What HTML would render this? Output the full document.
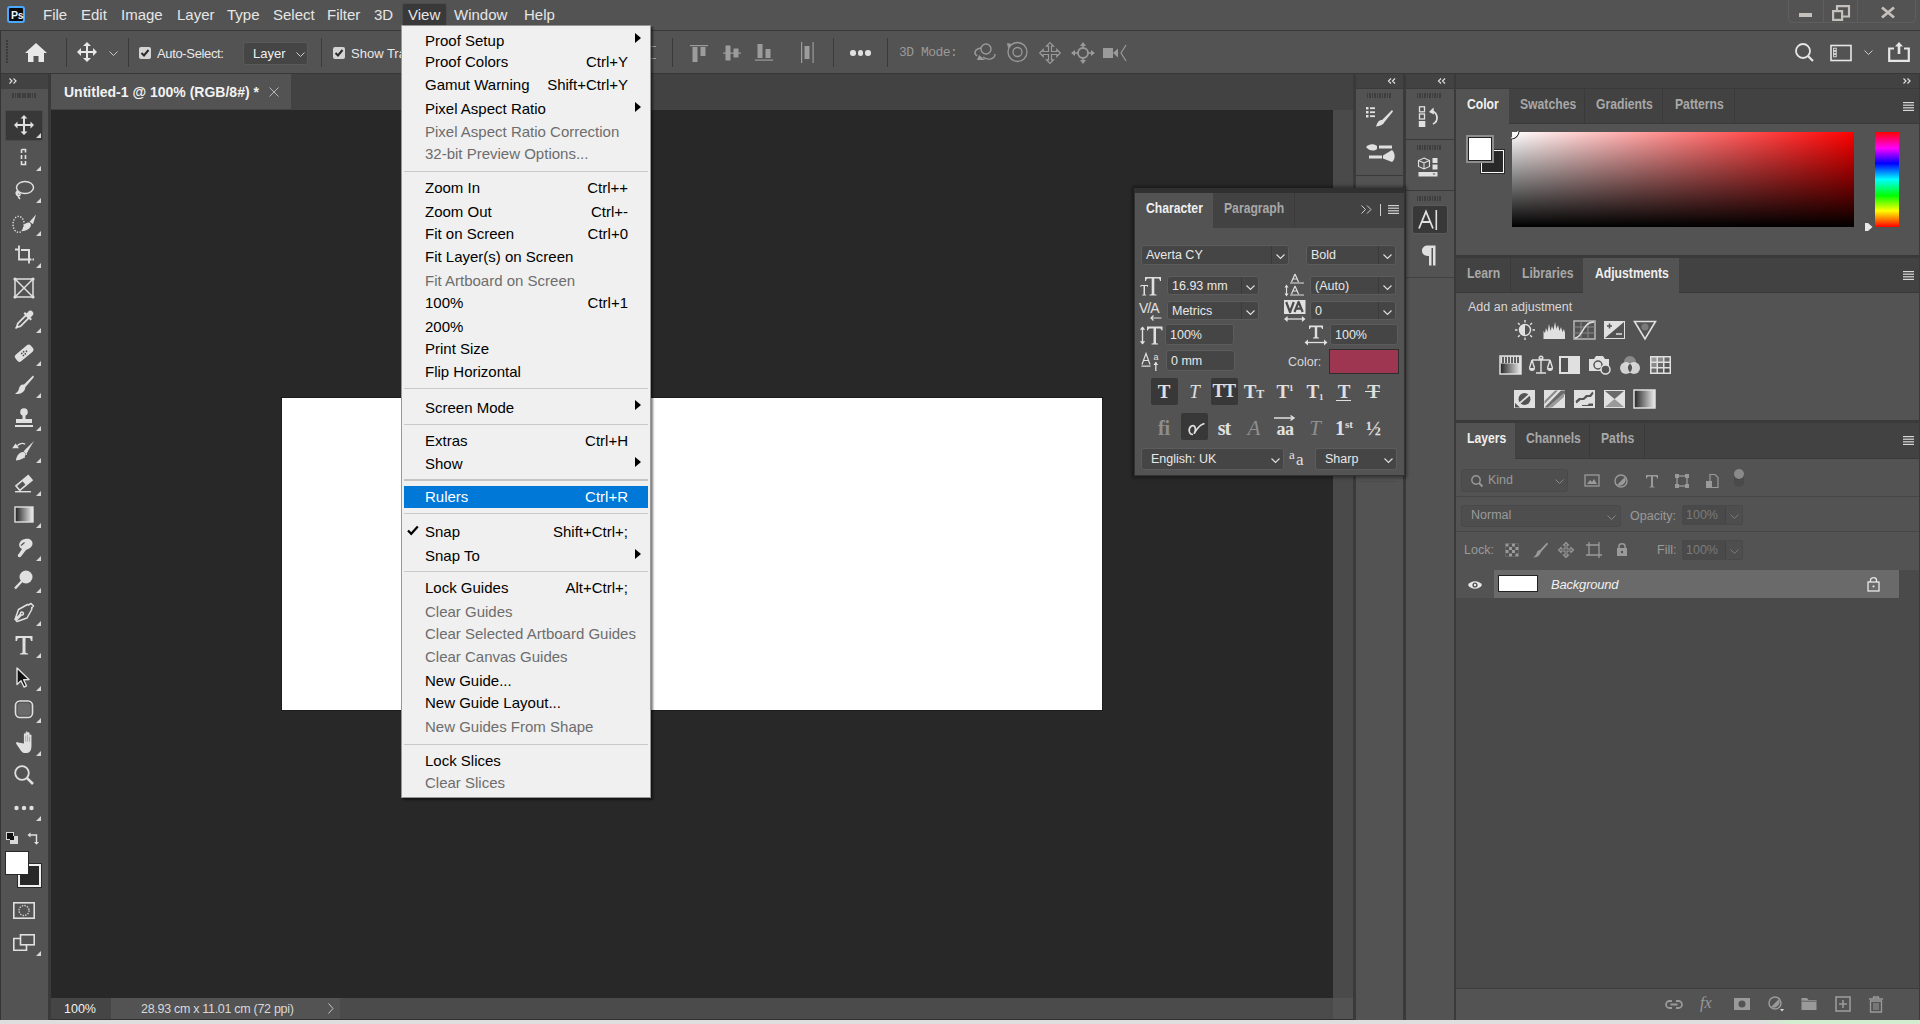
<!DOCTYPE html>
<html><head><meta charset="utf-8">
<style>
*{margin:0;padding:0;box-sizing:border-box}
html,body{width:1920px;height:1024px;overflow:hidden;background:#535353;font-family:"Liberation Sans",sans-serif;position:relative}
.a{position:absolute}
.t{position:absolute;white-space:nowrap;line-height:1}
svg{position:absolute;overflow:visible}
/* menubar */
#mb .t{font-size:15px;color:#e6e6e6;top:7px}
/* menu */
#menu{left:401px;top:25px;width:250px;height:773px;background:#f0f0f0;border:1px solid #a0a0a0;box-shadow:2px 2px 3px rgba(0,0,0,.45)}
.mi{font-size:15px}
#menu .s{left:auto;right:22px}
#menu .d{color:#6d6d6d}
#menu .sep{position:absolute;left:2px;right:2px;height:1px;background:#c8c8c8}
#menu .arr{position:absolute;left:234px;width:0;height:0;border-left:6px solid #000;border-top:5px solid transparent;border-bottom:5px solid transparent}
.tab{font-size:14px;font-weight:bold;transform:scaleX(.87);transform-origin:0 0}
</style></head>
<body>
<!-- MENU BAR -->
<div id="mb" class="a" style="left:0;top:0;width:1920px;height:30px;background:#535353">
  <div class="a" style="left:7px;top:5.5px;width:18px;height:17.5px;border:2px solid #4aa8ff;border-radius:3px;background:#0d0a0a"></div>
  <div class="t" style="left:11px;top:9.5px;font-size:10.5px;font-weight:bold;color:#eef2ff;letter-spacing:-0.3px">Ps</div>
  <div class="t" style="left:43px">File</div>
  <div class="t" style="left:81px">Edit</div>
  <div class="t" style="left:121px">Image</div>
  <div class="t" style="left:177px">Layer</div>
  <div class="t" style="left:227px">Type</div>
  <div class="t" style="left:273px">Select</div>
  <div class="t" style="left:327px">Filter</div>
  <div class="t" style="left:374px">3D</div>
  <div class="a" style="left:401.5px;top:3px;width:45px;height:22px;background:#393939;border:1px solid #4c4c4c;border-bottom:none;border-radius:3px 3px 0 0"></div>
  <div class="t" style="left:408px">View</div>
  <div class="t" style="left:454px">Window</div>
  <div class="t" style="left:524px">Help</div>
</div>
<div class="a" style="left:0;top:30px;width:1920px;height:1px;background:#393939"></div><div class="a" style="left:0;top:31px;width:1px;height:42px;background:#393939"></div>
<!-- OPTIONS BAR -->
<div id="ob" class="a" style="left:0;top:31px;width:1920px;height:42px;background:#535353"></div>
<!-- grip -->
<div class="a" style="left:6px;top:40px;width:2px;height:24px;background:repeating-linear-gradient(#3a3a3a 0 2px,transparent 2px 3px)"></div>
<!-- home -->
<svg style="left:25px;top:43px" width="22" height="19" viewBox="0 0 22 19"><path d="M11 0 L22 10 L19 10 L19 19 L13.5 19 L13.5 13 L8.5 13 L8.5 19 L3 19 L3 10 L0 10 Z" fill="#e8e8e8"/></svg>
<div class="a" style="left:66px;top:38px;width:1px;height:29px;background:#3a3a3a"></div>
<!-- move icon -->
<svg style="left:77px;top:42px" width="20" height="20" viewBox="0 0 20 20"><g fill="#e8e8e8"><path d="M10 0 L14 4 L11 4 L11 9 L16 9 L16 6 L20 10 L16 14 L16 11 L11 11 L11 16 L14 16 L10 20 L6 16 L9 16 L9 11 L4 11 L4 14 L0 10 L4 6 L4 9 L9 9 L9 4 L6 4 Z"/></g></svg>
<svg style="left:109px;top:51px" width="9" height="6" viewBox="0 0 9 6"><path d="M0.5 0.5 L4.5 4.5 L8.5 0.5" fill="none" stroke="#c8c8c8" stroke-width="1"/></svg>
<div class="a" style="left:128px;top:38px;width:1px;height:29px;background:#3a3a3a"></div>
<!-- checkbox -->
<div class="a" style="left:139px;top:47px;width:12px;height:12px;background:#d4d4d4;border-radius:2px"></div>
<svg style="left:140px;top:48px" width="10" height="10" viewBox="0 0 10 10"><path d="M1.5 5 L4 7.5 L8.5 2" fill="none" stroke="#2a2a2a" stroke-width="2"/></svg>
<div class="t" style="left:157px;top:47px;font-size:13px;color:#e8e8e8;letter-spacing:-0.35px">Auto-Select:</div>
<div class="a" style="left:243px;top:42px;width:65px;height:23px;background:#454545;border:1px solid #5a5a5a;border-radius:3px"></div>
<div class="t" style="left:253px;top:47px;font-size:13px;color:#f0f0f0">Layer</div>
<svg style="left:296px;top:52px" width="9" height="6" viewBox="0 0 9 6"><path d="M0.5 0.5 L4.5 4.5 L8.5 0.5" fill="none" stroke="#d0d0d0" stroke-width="1"/></svg>
<div class="a" style="left:321px;top:38px;width:1px;height:29px;background:#3a3a3a"></div>
<div class="a" style="left:333px;top:47px;width:12px;height:12px;background:#d4d4d4;border-radius:2px"></div>
<svg style="left:334px;top:48px" width="10" height="10" viewBox="0 0 10 10"><path d="M1.5 5 L4 7.5 L8.5 2" fill="none" stroke="#2a2a2a" stroke-width="2"/></svg>
<div class="t" style="left:351px;top:47px;font-size:13px;color:#e8e8e8">Show Transform Controls</div>
<!-- align icons -->
<div class="a" style="left:672px;top:38px;width:1px;height:29px;background:#3a3a3a"></div>
<div class="a" style="left:651px;top:46px;width:5px;height:1.2px;background:#9c9c9c"></div><div class="a" style="left:651px;top:58px;width:5px;height:1.2px;background:#9c9c9c"></div>
<svg style="left:690px;top:45px" width="20" height="18" viewBox="0 0 20 18"><g fill="#9c9c9c"><rect x="0" y="0" width="18" height="1.2"/><rect x="2.5" y="2" width="5" height="15"/><rect x="10.5" y="2" width="5" height="9"/></g></svg>
<svg style="left:723px;top:45px" width="20" height="18" viewBox="0 0 20 18"><g fill="#9c9c9c"><rect x="0" y="7.5" width="18" height="1.2"/><rect x="2.5" y="0.5" width="5" height="15"/><rect x="10.5" y="3.5" width="5" height="9"/></g></svg>
<svg style="left:755px;top:44px" width="20" height="18" viewBox="0 0 20 18"><g fill="#9c9c9c"><rect x="0" y="15.5" width="18" height="1.2"/><rect x="2.5" y="0" width="5" height="14"/><rect x="10.5" y="5" width="5" height="9"/></g></svg>
<svg style="left:800px;top:42px" width="16" height="22" viewBox="0 0 16 22"><g fill="#9c9c9c"><rect x="1" y="0" width="1.2" height="21"/><rect x="12.5" y="0" width="1.2" height="21"/><rect x="4.5" y="4" width="5" height="13"/></g></svg>
<div class="a" style="left:833px;top:38px;width:1px;height:29px;background:#3a3a3a"></div>
<div class="a" style="left:850px;top:50px;width:5.5px;height:5.5px;border-radius:50%;background:#e0e0e0"></div>
<div class="a" style="left:857.5px;top:50px;width:5.5px;height:5.5px;border-radius:50%;background:#e0e0e0"></div>
<div class="a" style="left:865px;top:50px;width:5.5px;height:5.5px;border-radius:50%;background:#e0e0e0"></div>
<div class="a" style="left:887px;top:38px;width:1px;height:29px;background:#3a3a3a"></div>
<div class="t" style="left:899px;top:46px;font-size:13px;color:#9a9a9a;font-family:'Liberation Mono',monospace;letter-spacing:-0.5px">3D Mode:</div>
<!-- 3d icons -->
<svg style="left:973px;top:41px" width="24" height="22" viewBox="0 0 24 22"><g fill="none" stroke="#9a9a9a" stroke-width="1.4"><circle cx="13" cy="8" r="5"/><path d="M8 7 C2 8 0 12 4 15 M10 16 C15 20 22 18 22 13"/></g><path d="M6 14 L12 19 L4 19 Z" fill="#9a9a9a"/></svg>
<svg style="left:1006px;top:41px" width="22" height="22" viewBox="0 0 22 22"><g fill="none" stroke="#9a9a9a" stroke-width="1.3"><circle cx="11.5" cy="11" r="9.5"/><circle cx="11.5" cy="11" r="4.5"/></g><path d="M1 2 L6 3 L2 7 Z" fill="#9a9a9a"/></svg>
<svg style="left:1039px;top:42px" width="22" height="22" viewBox="0 0 22 22"><path d="M11 0.7 L14.5 4.2 L12.5 4.2 L12.5 9.5 L17.8 9.5 L17.8 7.5 L21.3 11 L17.8 14.5 L17.8 12.5 L12.5 12.5 L12.5 17.8 L14.5 17.8 L11 21.3 L7.5 17.8 L9.5 17.8 L9.5 12.5 L4.2 12.5 L4.2 14.5 L0.7 11 L4.2 7.5 L4.2 9.5 L9.5 9.5 L9.5 4.2 L7.5 4.2 Z" fill="none" stroke="#9a9a9a" stroke-width="1.2"/></svg>
<svg style="left:1071px;top:42px" width="24" height="22" viewBox="0 0 24 22"><g fill="#9a9a9a"><path d="M12 0 L15 4 L9 4 Z M12 22 L15 18 L9 18 Z M0 11 L4 8 L4 14 Z M24 11 L20 8 L20 14 Z"/></g><circle cx="12" cy="11" r="5" fill="none" stroke="#9a9a9a" stroke-width="1.8"/><path d="M12 4 V6 M12 16 V18 M4 11 H7 M17 11 H20" stroke="#9a9a9a" stroke-width="1.5"/></svg>
<svg style="left:1103px;top:44px" width="26" height="18" viewBox="0 0 26 18"><rect x="0" y="4" width="10" height="10" fill="#9a9a9a"/><path d="M10 9 L15 4.5 L15 13.5 Z" fill="#9a9a9a"/><path d="M23 1 L18 9 L23 17" fill="none" stroke="#9a9a9a" stroke-width="1.2"/></svg>
<!-- right icons -->
<svg style="left:1795px;top:43px" width="20" height="20" viewBox="0 0 20 20"><circle cx="8" cy="8" r="7" fill="none" stroke="#e6e6e6" stroke-width="1.8"/><path d="M13 13 L18 18" stroke="#e6e6e6" stroke-width="2.2"/></svg>
<svg style="left:1830px;top:44px" width="22" height="18" viewBox="0 0 22 18"><rect x="1" y="1.5" width="20" height="15" fill="none" stroke="#e6e6e6" stroke-width="1.6"/><g fill="none" stroke="#e6e6e6" stroke-width="0.9"><rect x="3.6" y="4.2" width="2.6" height="2.4"/><rect x="3.6" y="7.3" width="2.6" height="2.4"/><rect x="3.6" y="10.4" width="2.6" height="2.4"/></g></svg>
<svg style="left:1864px;top:50px" width="9" height="6" viewBox="0 0 9 6"><path d="M0.5 0.5 L4.5 4.5 L8.5 0.5" fill="none" stroke="#c8c8c8" stroke-width="1"/></svg>
<svg style="left:1888px;top:41px" width="22" height="21" viewBox="0 0 22 21"><path d="M6 7.5 L1.2 7.5 L1.2 19.8 L20.8 19.8 L20.8 7.5 L16 7.5" fill="none" stroke="#e6e6e6" stroke-width="2.2"/><path d="M11 1 L15 5.5 L12.3 5.5 L12.3 13 L9.7 13 L9.7 5.5 L7 5.5 Z" fill="#e6e6e6"/></svg>
<!-- window controls -->
<div class="a" style="left:1788px;top:-3px;width:128px;height:26px;border:1px solid #5e5e5e;border-radius:4px"></div>
<div class="a" style="left:1823px;top:0;width:1px;height:23px;background:#5e5e5e"></div>
<div class="a" style="left:1857px;top:0;width:1px;height:23px;background:#5e5e5e"></div>
<div class="a" style="left:1799px;top:12.5px;width:13px;height:4px;background:#c4c0bc"></div>
<svg style="left:1832px;top:5px" width="18" height="16" viewBox="0 0 18 16"><g fill="none" stroke="#c4c0bc" stroke-width="2.2"><rect x="1.1" y="6.1" width="9" height="8.8"/><path d="M5 5.5 V1.1 H17 V11.5 H11"/></g></svg>
<svg style="left:1881px;top:7px" width="14" height="11" viewBox="0 0 14 11"><path d="M1 0.5 L13 10.5 M13 0.5 L1 10.5" stroke="#c4c0bc" stroke-width="2.8"/></svg>
<div class="a" style="left:0;top:73px;width:1920px;height:1px;background:#383838"></div>
<!-- LEFT TOOLBAR -->
<div id="tb" class="a" style="left:0;top:74px;width:48px;height:946px;background:#535353"></div>
<!--TOOLS-->
<div class="a" style="left:0;top:74px;width:48px;height:15px;background:#424242"></div>
<svg style="left:9px;top:78px" width="8" height="6" viewBox="0 0 8 6"><path d="M0.5 0.5 L3 3 L0.5 5.5 M4.5 0.5 L7 3 L4.5 5.5" fill="none" stroke="#e0e0e0" stroke-width="1.2"/></svg>
<div class="a" style="left:12px;top:93px;width:24px;height:5px;background:repeating-linear-gradient(90deg,#3e3e3e 0 1.5px,transparent 1.5px 2.5px)"></div>
<div class="a" style="left:5px;top:110px;width:38px;height:31px;background:#383838;border:1px solid #4a4a4a;border-radius:2px"></div>
<svg style="left:12px;top:113.0px" width="24" height="24" viewBox="0 0 24 24"><path d="M12 2 L15.5 5.5 L13 5.5 L13 11 L18.5 11 L18.5 8.5 L22 12 L18.5 15.5 L18.5 13 L13 13 L13 18.5 L15.5 18.5 L12 22 L8.5 18.5 L11 18.5 L11 13 L5.5 13 L5.5 15.5 L2 12 L5.5 8.5 L5.5 11 L11 11 L11 5.5 L8.5 5.5 Z" fill="#e0e0e0"/></svg>
<svg style="left:36px;top:133.0px" width="5" height="5" viewBox="0 0 5 5"><path d="M5 0 V5 H0 Z" fill="#d8d8d8"/></svg>
<svg style="left:12px;top:145.5px" width="24" height="24" viewBox="0 0 24 24"><g fill="none" stroke="#e0e0e0" stroke-width="1.6"><path d="M9.5 3.5 H13.5 V6.5 M9.5 3.5 V7 M13.5 9 V13 M9.5 9 V13 M13.5 15 V18.5 H9.5 V15"/></g></svg>
<svg style="left:36px;top:165.5px" width="5" height="5" viewBox="0 0 5 5"><path d="M5 0 V5 H0 Z" fill="#d8d8d8"/></svg>
<svg style="left:12px;top:178.0px" width="24" height="24" viewBox="0 0 24 24"><g fill="none" stroke="#e0e0e0" stroke-width="1.5"><ellipse cx="13" cy="9.5" rx="8.5" ry="6"/><path d="M6 13 C3 14 4 18 7 17.5 C9 17 8 14.5 6 14.5 C5 15 6 19 8 21"/></g></svg>
<svg style="left:36px;top:198.0px" width="5" height="5" viewBox="0 0 5 5"><path d="M5 0 V5 H0 Z" fill="#d8d8d8"/></svg>
<svg style="left:12px;top:210.5px" width="24" height="24" viewBox="0 0 24 24"><ellipse cx="6.6" cy="13.4" rx="5.6" ry="8" fill="none" stroke="#e0e0e0" stroke-width="1.4" stroke-dasharray="1.3 1.5"/><path d="M10.2 20 C11 15.5 13 11.8 16.3 11.6 C18.4 11.5 19.6 13.4 18.6 15.4 C17.2 18.4 13.8 19.7 10.2 20 Z" fill="#e0e0e0"/><path d="M17.6 10.8 L24 3.6 L21 13.2 Z" fill="#e0e0e0"/></svg>
<svg style="left:36px;top:230.5px" width="5" height="5" viewBox="0 0 5 5"><path d="M5 0 V5 H0 Z" fill="#d8d8d8"/></svg>
<svg style="left:12px;top:243.0px" width="24" height="24" viewBox="0 0 24 24"><g fill="none" stroke="#e0e0e0" stroke-width="1.8"><path d="M3 6.5 H7 M7 2.5 V16.5 H19.5 M20.5 16.5 H22 M17 20.5 V7 H9"/></g><path d="M17 7 V16.5" stroke="#e0e0e0" stroke-width="1.8"/></svg>
<svg style="left:36px;top:263.0px" width="5" height="5" viewBox="0 0 5 5"><path d="M5 0 V5 H0 Z" fill="#d8d8d8"/></svg>
<svg style="left:12px;top:275.5px" width="24" height="24" viewBox="0 0 24 24"><g fill="none" stroke="#e0e0e0" stroke-width="1.5"><rect x="3" y="3" width="18" height="18"/><path d="M3 3 L21 21 M21 3 L3 21"/></g><g fill="#e0e0e0"><circle cx="3" cy="3" r="1.6"/><circle cx="21" cy="3" r="1.6"/><circle cx="3" cy="21" r="1.6"/><circle cx="21" cy="21" r="1.6"/></g></svg>
<svg style="left:12px;top:308.0px" width="24" height="24" viewBox="0 0 24 24"><path d="M20.5 3.5 C19 2 17 2.5 16 4 L14.5 5.5 L13 4 L11.5 5.5 L13 7 L5 15 L4 18.5 L3 20 L4 21 L5.5 20 L9 19 L17 11 L18.5 12.5 L20 11 L18.5 9.5 L20 8 C21.5 7 22 5 20.5 3.5 Z M6.5 16 L14 8.5 L15.5 10 L8 17.5 L6 18 Z" fill="#e0e0e0" fill-rule="evenodd"/></svg>
<svg style="left:36px;top:328.0px" width="5" height="5" viewBox="0 0 5 5"><path d="M5 0 V5 H0 Z" fill="#d8d8d8"/></svg>
<svg style="left:12px;top:340.5px" width="24" height="24" viewBox="0 0 24 24"><g transform="rotate(-40 12 12)"><rect x="2" y="8" width="20" height="8.5" rx="2.5" fill="#e0e0e0"/><g fill="#535353"><circle cx="10" cy="10.8" r="0.9"/><circle cx="12.5" cy="10.8" r="0.9"/><circle cx="10" cy="13.5" r="0.9"/><circle cx="12.5" cy="13.5" r="0.9"/><circle cx="15" cy="12.2" r="0.9"/></g></g></svg>
<svg style="left:36px;top:360.5px" width="5" height="5" viewBox="0 0 5 5"><path d="M5 0 V5 H0 Z" fill="#d8d8d8"/></svg>
<svg style="left:12px;top:373.0px" width="24" height="24" viewBox="0 0 24 24"><path d="M21 2.5 L12 11.5 C9 11 7.5 13 7 15.5 C6.5 18 5 19.5 3 21 C7 21.5 11.5 20 12.8 16.5 L13.5 14 L22 4 Z" fill="#e0e0e0"/></svg>
<svg style="left:36px;top:393.0px" width="5" height="5" viewBox="0 0 5 5"><path d="M5 0 V5 H0 Z" fill="#d8d8d8"/></svg>
<svg style="left:12px;top:405.5px" width="24" height="24" viewBox="0 0 24 24"><g fill="#e0e0e0"><circle cx="12" cy="6" r="3.8"/><rect x="10.5" y="8" width="3" height="5"/><path d="M4 13 H20 V17 H4 Z"/><rect x="3" y="19" width="18" height="2"/></g></svg>
<svg style="left:36px;top:425.5px" width="5" height="5" viewBox="0 0 5 5"><path d="M5 0 V5 H0 Z" fill="#d8d8d8"/></svg>
<svg style="left:12px;top:438.0px" width="24" height="24" viewBox="0 0 24 24"><path d="M3.9 22.4 C4.8 17.5 7.3 14.3 10.8 14.1 C12.8 14 14 15.8 13.2 17.8 C12 20.8 8.5 22.2 3.9 22.4 Z" fill="#e0e0e0"/><path d="M11.6 13.2 L21.9 2.9 L14.3 15.9 Z" fill="#e0e0e0"/><path d="M0.2 10.3 L3.6 5.6 L7 10.3 Z" fill="#e0e0e0"/><path d="M5.5 7.8 C7 5.5 10.5 4.8 13.2 6.2" fill="none" stroke="#e0e0e0" stroke-width="1.2"/><g fill="#e0e0e0"><rect x="14.2" y="10.5" width="1.2" height="1.3"/><rect x="14.3" y="12.9" width="1.2" height="1.3"/><rect x="13.6" y="15.5" width="1.2" height="1.5"/><rect x="11.4" y="18.7" width="1.5" height="1.1"/></g></svg>
<svg style="left:36px;top:458.0px" width="5" height="5" viewBox="0 0 5 5"><path d="M5 0 V5 H0 Z" fill="#d8d8d8"/></svg>
<svg style="left:12px;top:470.5px" width="24" height="24" viewBox="0 0 24 24"><g transform="rotate(-40 12 12)"><path d="M4 9 H20 V15 H4 Z" fill="none" stroke="#e0e0e0" stroke-width="1.6"/><rect x="12" y="9" width="8" height="6" fill="#e0e0e0"/></g><rect x="3" y="20" width="16" height="1.4" fill="#e0e0e0"/></svg>
<svg style="left:36px;top:490.5px" width="5" height="5" viewBox="0 0 5 5"><path d="M5 0 V5 H0 Z" fill="#d8d8d8"/></svg>
<svg style="left:12px;top:503.0px" width="24" height="24" viewBox="0 0 24 24"><defs><linearGradient id="gr" x1="0" y1="0" x2="1" y2="0"><stop offset="0" stop-color="#1e1e1e"/><stop offset="1" stop-color="#f0f0f0"/></linearGradient></defs><rect x="3" y="4" width="18" height="15" fill="url(#gr)" stroke="#e0e0e0" stroke-width="1.4"/></svg>
<svg style="left:36px;top:523.0px" width="5" height="5" viewBox="0 0 5 5"><path d="M5 0 V5 H0 Z" fill="#d8d8d8"/></svg>
<svg style="left:12px;top:535.5px" width="24" height="24" viewBox="0 0 24 24"><path d="M13 3 C17 2 21 4 20.5 8 C20 11.5 16.5 13 14 14 L9 20.5 C8.5 21.5 6.5 21.5 6 20.5 C5.5 19.5 6 18.5 7 17.5 L10 13 C7.5 12 6.5 9.5 7.5 7 C8.5 4.5 10.5 3.5 13 3 Z" fill="#e0e0e0"/><path d="M9 9.5 L12.5 6.5" stroke="#535353" stroke-width="1.2"/></svg>
<svg style="left:36px;top:555.5px" width="5" height="5" viewBox="0 0 5 5"><path d="M5 0 V5 H0 Z" fill="#d8d8d8"/></svg>
<svg style="left:12px;top:568.0px" width="24" height="24" viewBox="0 0 24 24"><circle cx="14" cy="9" r="6.5" fill="#e0e0e0"/><path d="M10 13 L3 20.5" stroke="#e0e0e0" stroke-width="2.4"/></svg>
<svg style="left:36px;top:588.0px" width="5" height="5" viewBox="0 0 5 5"><path d="M5 0 V5 H0 Z" fill="#d8d8d8"/></svg>
<svg style="left:12px;top:600.5px" width="24" height="24" viewBox="0 0 24 24"><path d="M19 2.5 L21.5 5 L19.5 7 L20 8 L15 17 L5 20.5 L4 19.5 L9.5 14 A1.5 1.5 0 1 0 8.5 13 L3 18.5 L6.5 8.5 L15.5 3.5 L16.5 4 Z" fill="none" stroke="#e0e0e0" stroke-width="1.5" stroke-linejoin="round"/></svg>
<svg style="left:36px;top:620.5px" width="5" height="5" viewBox="0 0 5 5"><path d="M5 0 V5 H0 Z" fill="#d8d8d8"/></svg>
<svg style="left:12px;top:633.0px" width="24" height="24" viewBox="0 0 24 24"><path d="M3.5 3 H20.5 V8 H19 C18.7 5.5 18 5 16 5 H13.5 V19 C13.5 20 14 20.3 16 20.3 V21.5 H8 V20.3 C10 20.3 10.5 20 10.5 19 V5 H8 C6 5 5.3 5.5 5 8 H3.5 Z" fill="#e0e0e0"/></svg>
<svg style="left:36px;top:653.0px" width="5" height="5" viewBox="0 0 5 5"><path d="M5 0 V5 H0 Z" fill="#d8d8d8"/></svg>
<svg style="left:12px;top:665.5px" width="24" height="24" viewBox="0 0 24 24"><path d="M5 2 L5 18.5 L9 14.8 L12 21 L14.5 19.8 L11.6 13.8 L17 13.5 Z" fill="#111" stroke="#e0e0e0" stroke-width="1.4" stroke-linejoin="round"/></svg>
<svg style="left:36px;top:685.5px" width="5" height="5" viewBox="0 0 5 5"><path d="M5 0 V5 H0 Z" fill="#d8d8d8"/></svg>
<svg style="left:12px;top:698.0px" width="24" height="24" viewBox="0 0 24 24"><rect x="3.5" y="3" width="17" height="16.5" rx="4.5" fill="none" stroke="#e0e0e0" stroke-width="1.6"/><rect x="5.5" y="5" width="13" height="12.5" rx="3" fill="#7a7a7a" opacity="0.6"/></svg>
<svg style="left:36px;top:718.0px" width="5" height="5" viewBox="0 0 5 5"><path d="M5 0 V5 H0 Z" fill="#d8d8d8"/></svg>
<svg style="left:12px;top:730.5px" width="24" height="24" viewBox="0 0 24 24"><g transform="translate(0.5,-2.5) scale(1.2)"><path d="M9.5 12.5 V4.8 C9.5 3.8 11 3.8 11 4.8 V11 V3.3 C11 2.3 12.6 2.3 12.6 3.3 V11 V3.8 C12.6 2.8 14.2 2.8 14.2 3.8 V11 V5.8 C14.2 4.8 15.8 4.8 15.8 5.8 V14.5 C15.8 18.5 14 20.5 11 20.5 C8.5 20.5 7.3 19 6.2 17.2 L3.2 13 C2.5 12 3.5 10.8 4.6 11.6 Z" fill="#e0e0e0"/><path d="M11 11 V6 M12.6 11 V5.5 M14.2 11 V7" stroke="#8a8a8a" stroke-width="0.5"/></g></svg>
<svg style="left:36px;top:750.5px" width="5" height="5" viewBox="0 0 5 5"><path d="M5 0 V5 H0 Z" fill="#d8d8d8"/></svg>
<svg style="left:12px;top:763.0px" width="24" height="24" viewBox="0 0 24 24"><circle cx="10" cy="10" r="6.8" fill="none" stroke="#e0e0e0" stroke-width="1.8"/><path d="M14.8 14.8 L21 21" stroke="#e0e0e0" stroke-width="2.6"/></svg>
<svg style="left:12px;top:795.5px" width="24" height="24" viewBox="0 0 24 24"><g fill="#e0e0e0"><circle cx="4.5" cy="12" r="2.2"/><circle cx="12" cy="12" r="2.2"/><circle cx="19.5" cy="12" r="2.2"/></g></svg>
<svg style="left:36px;top:815.5px" width="5" height="5" viewBox="0 0 5 5"><path d="M5 0 V5 H0 Z" fill="#d8d8d8"/></svg>
<div class="a" style="left:6px;top:832px;width:8px;height:8px;background:#111;border:1px solid #d8d8d8"></div>
<div class="a" style="left:10px;top:836px;width:8px;height:8px;background:#d8d8d8"></div>
<div class="a" style="left:10px;top:836px;width:4px;height:4px;background:#111"></div>
<svg style="left:27px;top:832px" width="13" height="13" viewBox="0 0 13 13"><g fill="none" stroke="#e0e0e0" stroke-width="1.4"><path d="M3 3 H9.5 V10"/></g><path d="M0.5 3 L3.5 0.5 V5.5 Z M9.5 12.8 L7 10 H12 Z" fill="#e0e0e0"/></svg>
<div class="a" style="left:18px;top:864px;width:23px;height:23px;background:#282828;border:2px solid #f0f0f0;box-shadow:0 0 0 1px #2a2a2a"></div>
<div class="a" style="left:6px;top:852px;width:22px;height:22px;background:#ffffff;box-shadow:0 0 0 1px #2a2a2a"></div>
<svg style="left:13px;top:902px" width="22" height="17" viewBox="0 0 22 17"><rect x="0.8" y="0.8" width="20.4" height="15.4" fill="none" stroke="#e0e0e0" stroke-width="1.6"/><circle cx="11" cy="8.5" r="5" fill="none" stroke="#e0e0e0" stroke-width="1.3" stroke-dasharray="1.3 1.3"/></svg>
<svg style="left:13px;top:934px" width="22" height="17" viewBox="0 0 22 17"><g fill="none" stroke="#e0e0e0" stroke-width="1.6"><rect x="7.5" y="0.8" width="13.7" height="10"/><path d="M7.5 4.5 H0.8 V16.2 H13.5 V10.8"/></g></svg>
<svg style="left:36px;top:951px" width="5" height="5" viewBox="0 0 5 5"><path d="M5 0 V5 H0 Z" fill="#d8d8d8"/></svg>
<!--/TOOLS-->
<div class="a" style="left:0;top:31px;width:1px;height:989px;background:#353535"></div>
<div class="a" style="left:48px;top:74px;width:3px;height:946px;background:#3a3a3a"></div>
<!-- DOC TAB ROW -->
<div class="a" style="left:51px;top:74px;width:1302px;height:36px;background:#424242"></div>
<div class="a" style="left:51px;top:74px;width:240px;height:35px;background:#535353"></div>
<div class="t" style="left:64px;top:84.5px;font-size:14px;font-weight:bold;color:#f2f2f2">Untitled-1 @ 100% (RGB/8#) *</div>
<svg style="left:269px;top:87px" width="10" height="10" viewBox="0 0 10 10"><path d="M0.5 0.5 L9.5 9.5 M9.5 0.5 L0.5 9.5" stroke="#b8b8b8" stroke-width="1"/></svg>
<!-- CANVAS -->
<div class="a" style="left:51px;top:110px;width:1282px;height:888px;background:#282828"></div>
<div class="a" style="left:282px;top:398px;width:820px;height:312px;background:#ffffff;box-shadow:0 0 0 1px #1c1c1c"></div>
<div class="a" style="left:1333px;top:110px;width:20px;height:888px;background:#4a4a4a"></div>
<!-- STATUS BAR -->
<div class="a" style="left:51px;top:998px;width:1282px;height:21px;background:#4b4b4b"></div>
<div class="a" style="left:1333px;top:998px;width:20px;height:21px;background:#535353"></div>
<div class="a" style="left:51px;top:998px;width:60px;height:21px;background:#454545"></div>
<div class="a" style="left:111px;top:998px;width:229px;height:21px;background:#535353"></div>
<div class="a" style="left:51px;top:1019px;width:1302px;height:1px;background:#303030"></div>
<div class="t" style="left:64px;top:1002.5px;font-size:12.5px;color:#f0f0f0">100%</div>
<div class="t" style="left:141px;top:1003px;font-size:12.5px;color:#d8d8d8;letter-spacing:-0.3px">28.93 cm x 11.01 cm (72 ppi)</div>
<svg style="left:328px;top:1003px" width="6" height="11" viewBox="0 0 6 11"><path d="M0.5 0.5 L5 5.5 L0.5 10.5" fill="none" stroke="#c8c8c8" stroke-width="1"/></svg>
<div class="a" style="left:0;top:1020px;width:1920px;height:4px;background:linear-gradient(90deg,#dedede 0,#dedede 1760px,#d4ecd0 1790px,#d4ecd0 100%)"></div>
<!-- RIGHT COLUMNS -->
<!--RIGHT1-->
<div class="a" style="left:1333px;top:74px;width:20px;height:36px;background:#424242"></div>
<div class="a" style="left:1353px;top:74px;width:567px;height:946px;background:#3a3a3a"></div>
<div class="a" style="left:1356px;top:74px;width:47px;height:14px;background:#424242"></div>
<div class="a" style="left:1356px;top:89px;width:47px;height:86px;background:#535353"></div>
<div class="a" style="left:1356px;top:176px;width:47px;height:12px;background:#535353"></div>
<div class="a" style="left:1356px;top:476px;width:47px;height:544px;background:#535353"></div>
<div class="a" style="left:1358px;top:481px;width:40px;height:1px;background:repeating-linear-gradient(90deg,#474747 0 1px,transparent 1px 2px)"></div>
<div class="a" style="left:1406px;top:74px;width:48px;height:14px;background:#424242"></div>
<div class="a" style="left:1406px;top:89px;width:48px;height:50px;background:#535353"></div>
<div class="a" style="left:1406px;top:140px;width:48px;height:50px;background:#535353"></div>
<div class="a" style="left:1406px;top:191px;width:48px;height:829px;background:#535353"></div>
<div class="a" style="left:1406px;top:277px;width:48px;height:1px;background:#424242"></div>
<div class="a" style="left:1456px;top:74px;width:463px;height:14px;background:#424242"></div>
<svg style="left:1388px;top:78px" width="8" height="6" viewBox="0 0 8 6"><path d="M3 0.5 L0.5 3 L3 5.5 M7 0.5 L4.5 3 L7 5.5" fill="none" stroke="#e0e0e0" stroke-width="1.2"/></svg>
<svg style="left:1438px;top:78px" width="8" height="6" viewBox="0 0 8 6"><path d="M3 0.5 L0.5 3 L3 5.5 M7 0.5 L4.5 3 L7 5.5" fill="none" stroke="#e0e0e0" stroke-width="1.2"/></svg>
<svg style="left:1903px;top:78px" width="8" height="6" viewBox="0 0 8 6"><path d="M0.5 0.5 L3 3 L0.5 5.5 M4.5 0.5 L7 3 L4.5 5.5" fill="none" stroke="#e0e0e0" stroke-width="1.2"/></svg>
<div class="a" style="left:1367px;top:93px;width:24px;height:5px;background:repeating-linear-gradient(90deg,#3e3e3e 0 1.5px,transparent 1.5px 2.5px)"></div>
<div class="a" style="left:1417px;top:93px;width:24px;height:5px;background:repeating-linear-gradient(90deg,#3e3e3e 0 1.5px,transparent 1.5px 2.5px)"></div>
<div class="a" style="left:1417px;top:145px;width:24px;height:5px;background:repeating-linear-gradient(90deg,#3e3e3e 0 1.5px,transparent 1.5px 2.5px)"></div>
<div class="a" style="left:1417px;top:196px;width:24px;height:5px;background:repeating-linear-gradient(90deg,#3e3e3e 0 1.5px,transparent 1.5px 2.5px)"></div>
<svg style="left:1366px;top:106px" width="28" height="24" viewBox="0 0 28 24"><g fill="#e0e0e0"><rect x="0" y="1" width="2.5" height="2.5"/><rect x="4" y="1.3" width="5" height="1.8"/><rect x="0" y="5" width="2.5" height="2.5"/><rect x="4" y="5.3" width="5" height="1.8"/><rect x="0" y="9" width="2.5" height="2.5"/><rect x="4" y="9.3" width="5" height="1.8"/><path d="M26 4 L16 14 C13 14 11.5 16 10 20.5 C14.5 20 17.5 18.5 18.5 16 L27 5.5 Z"/></g></svg>
<svg style="left:1366px;top:142px" width="28" height="24" viewBox="0 0 28 24"><g fill="#e0e0e0"><path d="M0 5 C3 1.5 8 1.5 11 4 L11 7 C8 9.5 3 9 0 5 Z"/><rect x="13" y="3.5" width="13" height="3"/><rect x="3" y="13.5" width="13" height="3"/><path d="M26 8 C30 12 29 18 26 20 L17 16.5 L17 13.5 Z"/></g></svg>
<svg style="left:1418px;top:106px" width="24" height="22" viewBox="0 0 24 22"><g fill="none" stroke="#e0e0e0" stroke-width="1.3"><rect x="1.5" y="0.8" width="5" height="5"/><rect x="1.5" y="8" width="5" height="5"/></g><rect x="0.8" y="15" width="6.5" height="6" fill="#e0e0e0"/><path d="M15 18 C21 15 20 7 14 5" fill="none" stroke="#e0e0e0" stroke-width="1.8"/><path d="M11 6 L15.5 1.5 L16 8.5 Z" fill="#e0e0e0"/></svg>
<svg style="left:1418px;top:157px" width="24" height="22" viewBox="0 0 24 22"><g fill="none" stroke="#e0e0e0" stroke-width="1.1"><path d="M6 1 L11.5 3.5 L11.5 9.5 L6 12 L0.5 9.5 L0.5 3.5 Z M0.5 3.5 L6 6 L11.5 3.5 M6 6 V12"/></g><g fill="#e0e0e0"><rect x="14.5" y="1" width="5" height="5"/><rect x="14.5" y="7.5" width="5" height="5"/><rect x="0.5" y="15" width="19" height="4.5"/></g><path d="M14.5 16.5 L17.5 16.5 L16 18 Z" fill="#535353"/></svg>
<div class="a" style="left:1412px;top:205px;width:36px;height:29px;background:#383838;border:1px solid #5a5a5a;border-radius:3px"></div>
<svg style="left:1418px;top:210px" width="22" height="20" viewBox="0 0 22 20"><path d="M1 18.5 L8 1.5 L15 18.5 M3.8 12 H12.2" fill="none" stroke="#e0e0e0" stroke-width="1.8"/><rect x="17.5" y="0" width="1.6" height="20" fill="#e0e0e0"/></svg>
<svg style="left:1420px;top:245px" width="18" height="21" viewBox="0 0 18 21"><path d="M8 0.5 H15.5 V20.5 H13 V3 H11.5 V20.5 H9 V11 H8 C4.5 11 2 9 2 5.8 C2 2.5 4.5 0.5 8 0.5 Z" fill="#e0e0e0"/></svg>
<div class="a" style="left:1456px;top:89px;width:463px;height:34px;background:#424242"></div><div class="a" style="left:1456px;top:89px;width:53px;height:35px;background:#535353"></div><div class="t tab" style="left:1467px;top:97.15px;color:#f0f0f0">Color</div><div class="a" style="left:1584px;top:89px;width:1px;height:34px;background:#3a3a3a"></div><div class="t tab" style="left:1520px;top:97.15px;color:#a8a8a8">Swatches</div><div class="a" style="left:1662px;top:89px;width:1px;height:34px;background:#3a3a3a"></div><div class="t tab" style="left:1596px;top:97.15px;color:#a8a8a8">Gradients</div><div class="a" style="left:1734px;top:89px;width:1px;height:34px;background:#3a3a3a"></div><div class="t tab" style="left:1675px;top:97.15px;color:#a8a8a8">Patterns</div><svg style="left:1903px;top:101.5px" width="11" height="9" viewBox="0 0 11 9"><g fill="#d8d8d8"><rect y="0" width="11" height="1.2"/><rect y="2.6" width="11" height="1.2"/><rect y="5.2" width="11" height="1.2"/><rect y="7.8" width="11" height="1.2"/></g></svg>
<div class="a" style="left:1456px;top:124px;width:463px;height:131px;background:#535353"></div>
<div class="a" style="left:1480.5px;top:149.5px;width:23px;height:23px;background:#282828;border:1.5px solid #f8f8f8;box-shadow:0 0 0 1px #2a2a2a, inset 0 0 0 1px #2a2a2a"></div>
<div class="a" style="left:1466px;top:135px;width:28px;height:28px;background:#8e8e8e"></div>
<div class="a" style="left:1468px;top:137px;width:24px;height:24px;background:#ffffff;border:1px solid #222"></div>
<div class="a" style="left:1512px;top:132px;width:342px;height:95px;background:linear-gradient(to bottom,rgba(0,0,0,0),#000),linear-gradient(to right,#fff,#ff0000)"></div>
<svg style="left:1511px;top:131px" width="10" height="10" viewBox="0 0 10 10"><path d="M0 8 A8 8 0 0 0 8 0" fill="none" stroke="#222" stroke-width="1.2"/><path d="M0 7 A7 7 0 0 0 7 0" fill="none" stroke="#fff" stroke-width="1"/></svg>
<div class="a" style="left:1875px;top:132px;width:24px;height:95px;background:linear-gradient(to bottom,#ff0000 0%,#ff00ff 17%,#0000ff 33%,#00ffff 50%,#00ff00 67%,#ffff00 83%,#ff0000 100%)"></div>
<svg style="left:1864px;top:222px" width="9" height="10" viewBox="0 0 9 10"><path d="M1 1 L4 1 L8.5 5 L4 9 L1 9 Z" fill="#e8e8e8"/></svg>
<div class="a" style="left:1456px;top:255px;width:463px;height:3px;background:#3a3a3a"></div>
<div class="a" style="left:1456px;top:258px;width:463px;height:34px;background:#424242"></div><div class="a" style="left:1510px;top:258px;width:1px;height:34px;background:#3a3a3a"></div><div class="t tab" style="left:1467px;top:266.15px;color:#a8a8a8">Learn</div><div class="a" style="left:1583px;top:258px;width:1px;height:34px;background:#3a3a3a"></div><div class="t tab" style="left:1522px;top:266.15px;color:#a8a8a8">Libraries</div><div class="a" style="left:1583px;top:258px;width:96px;height:35px;background:#535353"></div><div class="t tab" style="left:1595px;top:266.15px;color:#f0f0f0">Adjustments</div><svg style="left:1903px;top:270.5px" width="11" height="9" viewBox="0 0 11 9"><g fill="#d8d8d8"><rect y="0" width="11" height="1.2"/><rect y="2.6" width="11" height="1.2"/><rect y="5.2" width="11" height="1.2"/><rect y="7.8" width="11" height="1.2"/></g></svg>
<div class="a" style="left:1456px;top:293px;width:463px;height:127px;background:#535353"></div>
<div class="t" style="left:1468px;top:301px;font-size:12.5px;color:#d8d8d8">Add an adjustment</div>
<svg style="left:1513.0px;top:320.0px" width="24" height="20" viewBox="0 0 24 20"><circle cx="12" cy="10" r="5.5" fill="none" stroke="#e0e0e0" stroke-width="1.4"/><path d="M12 4.5 A5.5 5.5 0 0 0 12 15.5 Z" fill="#e0e0e0"/><g stroke="#e0e0e0" stroke-width="1.4"><path d="M12 0 V2.5 M12 17.5 V20 M2 10 H4.5 M19.5 10 H22 M5 3 L6.8 4.8 M17.2 15.2 L19 17 M19 3 L17.2 4.8 M6.8 15.2 L5 17"/></g></svg>
<svg style="left:1543.0px;top:320.0px" width="24" height="20" viewBox="0 0 24 20"><path d="M0.5 19 V11 L2 13 L3 8 L4.5 12 L6 4 L7.5 11 L9 6 L10.5 10 L12 2 L13.5 9 L15 5 L16.5 11 L18 7 L19.5 12 L21 9 L22 13 V19 Z" fill="#e0e0e0"/></svg>
<svg style="left:1573.0px;top:320.0px" width="24" height="20" viewBox="0 0 24 20"><rect x="1" y="1" width="21" height="18" fill="none" stroke="#b8b8b8" stroke-width="1.5"/><path d="M1 7 H22 M1 13 H22 M8 1 V19 M15 1 V19" stroke="#8a8a8a" stroke-width="1"/><path d="M2 18 C10 18 9 2 21 2" fill="none" stroke="#e0e0e0" stroke-width="1.5"/></svg>
<svg style="left:1603.0px;top:320.0px" width="24" height="20" viewBox="0 0 24 20"><rect x="1" y="1" width="21" height="18" fill="#e0e0e0"/><path d="M2 18 L21 2 V18 Z" fill="#535353"/><path d="M4 6 H9 M6.5 3.5 V8.5 M13 14 H19" stroke="#535353" stroke-width="1.5"/><path d="M13 14 H19" stroke="#e0e0e0" stroke-width="1.5"/></svg>
<svg style="left:1633.0px;top:320.0px" width="24" height="20" viewBox="0 0 24 20"><path d="M1.5 1.5 H22.5 L12 19 Z" fill="none" stroke="#e0e0e0" stroke-width="1.6"/><circle cx="12" cy="7" r="3.5" fill="#7a7a7a"/></svg>
<svg style="left:1498.5px;top:354.5px" width="24" height="20" viewBox="0 0 24 20"><defs><linearGradient id="bw1" x1="0" x2="1"><stop offset="0" stop-color="#222"/><stop offset="1" stop-color="#eee"/></linearGradient></defs><rect x="1" y="1" width="21" height="18" fill="url(#bw1)" stroke="#e0e0e0" stroke-width="1.5"/><rect x="1.5" y="1.5" width="20" height="7" fill="#e0e0e0"/><path d="M4 2 V8 M7 2 V8 M10 2 V8 M13 2 V8 M16 2 V8 M19 2 V8" stroke="#333" stroke-width="1.5"/></svg>
<svg style="left:1528.6px;top:354.5px" width="24" height="20" viewBox="0 0 24 20"><g fill="none" stroke="#e0e0e0" stroke-width="1.4"><path d="M3 5 H21 M12 3 V18 M7 18 H17 M3 5 L0.5 13 M3 5 L5.5 13 M21 5 L18.5 13 M21 5 L23.5 13"/><circle cx="12" cy="3" r="1.8"/></g><path d="M0 13 A3 3 0 0 0 6 13 Z M18 13 A3 3 0 0 0 24 13 Z" fill="#e0e0e0"/></svg>
<svg style="left:1558.4px;top:354.5px" width="24" height="20" viewBox="0 0 24 20"><rect x="1" y="1" width="21" height="18" fill="#e0e0e0"/><rect x="3" y="3" width="7" height="14" fill="#535353"/></svg>
<svg style="left:1587.5px;top:353.5px" width="26" height="22" viewBox="0 0 26 22"><path d="M1 5 H6 L8 2 H15 L17 5 H21 V17 H1 Z" fill="#e0e0e0"/><circle cx="10" cy="11" r="4" fill="none" stroke="#535353" stroke-width="1.5"/><circle cx="17.5" cy="15.5" r="4.5" fill="#535353" stroke="#e0e0e0" stroke-width="1.5"/></svg>
<svg style="left:1618.4px;top:354.5px" width="24" height="20" viewBox="0 0 24 20"><circle cx="12" cy="7" r="6" fill="#8a8a8a"/><circle cx="8" cy="13" r="6" fill="#e0e0e0" opacity="0.9"/><circle cx="16" cy="13" r="6" fill="#e0e0e0" opacity="0.9"/><path d="M12 8.5 A6 6 0 0 1 12 17.5 A6 6 0 0 1 12 8.5 Z" fill="#535353"/></svg>
<svg style="left:1648.5px;top:354.5px" width="24" height="20" viewBox="0 0 24 20"><rect x="1" y="1" width="21" height="18" fill="#e0e0e0"/><g fill="#6a6a6a"><rect x="2.5" y="2.5" width="5" height="4" fill="#9a9a9a"/><rect x="9" y="2.5" width="5" height="4" fill="#8a8a8a"/><rect x="15.5" y="2.5" width="5" height="4"/><rect x="2.5" y="8" width="5" height="4" fill="#8a8a8a"/><rect x="9" y="8" width="5" height="4"/><rect x="15.5" y="8" width="5" height="4" fill="#5a5a5a"/><rect x="2.5" y="13.5" width="5" height="4"/><rect x="9" y="13.5" width="5" height="4" fill="#5a5a5a"/><rect x="15.5" y="13.5" width="5" height="4" fill="#4a4a4a"/></g></svg>
<svg style="left:1513.0px;top:388.5px" width="24" height="20" viewBox="0 0 24 20"><rect x="1" y="1" width="21" height="18" fill="#e0e0e0"/><ellipse cx="11.5" cy="10" rx="6" ry="6" fill="#535353"/><path d="M2.5 18 L20.5 2" stroke="#e0e0e0" stroke-width="1.8"/><path d="M2 18.5 L7 18.5 L2 14 Z" fill="#535353"/></svg>
<svg style="left:1543.0px;top:388.5px" width="24" height="20" viewBox="0 0 24 20"><rect x="1" y="1" width="21" height="18" fill="#e0e0e0"/><path d="M1.5 18.5 L18 1.5 L22 1.5 L22 5 L6 18.5 Z" fill="#6a6a6a"/><path d="M4 18.5 L21 4 L21 8 L9 18.5 Z" fill="#9a9a9a"/><path d="M1.5 12 L12 1.5 L15 1.5 L1.5 15 Z" fill="#8a8a8a"/></svg>
<svg style="left:1573.0px;top:388.5px" width="24" height="20" viewBox="0 0 24 20"><rect x="1" y="1" width="21" height="18" fill="#e0e0e0"/><path d="M2.5 12 L6 9 L10 9 L13 6 L16.5 6 L19.5 2.5 L20.5 4.5 L18 8 L14.5 8 L11 11 L7.5 11 L3.5 14.5 Z M9 17 H20 V14.5 H16 L14.5 16 H9 Z" fill="#535353"/></svg>
<svg style="left:1603.0px;top:388.5px" width="24" height="20" viewBox="0 0 24 20"><rect x="1" y="1" width="21" height="18" fill="#e0e0e0"/><path d="M2 2 L11.5 10 L21 2 Z" fill="#6a6a6a"/><path d="M2 18 L11.5 10 L21 18 Z" fill="#9a9a9a"/></svg>
<svg style="left:1633.0px;top:388.5px" width="24" height="20" viewBox="0 0 24 20"><defs><linearGradient id="gm" x1="0" x2="1"><stop offset="0" stop-color="#222"/><stop offset="1" stop-color="#eee"/></linearGradient></defs><rect x="1" y="1" width="21" height="18" fill="url(#gm)" stroke="#e0e0e0" stroke-width="1.5"/></svg>
<div class="a" style="left:1456px;top:420px;width:463px;height:3px;background:#3a3a3a"></div>
<div class="a" style="left:1456px;top:423px;width:463px;height:35px;background:#424242"></div>
<div class="a" style="left:1456px;top:423px;width:59px;height:36px;background:#535353"></div>
<div class="a" style="left:1589px;top:423px;width:1px;height:35px;background:#3a3a3a"></div>
<div class="a" style="left:1644px;top:423px;width:1px;height:35px;background:#3a3a3a"></div>
<div class="t tab" style="left:1467px;top:431.15px;color:#f0f0f0">Layers</div>
<div class="t tab" style="left:1526px;top:431.15px;color:#a8a8a8">Channels</div>
<div class="t tab" style="left:1601px;top:431.15px;color:#a8a8a8">Paths</div>
<svg style="left:1903px;top:436px" width="11" height="9" viewBox="0 0 11 9"><g fill="#d8d8d8"><rect y="0" width="11" height="1.2"/><rect y="2.6" width="11" height="1.2"/><rect y="5.2" width="11" height="1.2"/><rect y="7.8" width="11" height="1.2"/></g></svg>
<div class="a" style="left:1456px;top:459px;width:463px;height:561px;background:#535353"></div>
<div class="a" style="left:1456px;top:496px;width:463px;height:1px;background:#464646"></div>
<div class="a" style="left:1456px;top:531px;width:463px;height:1px;background:#464646"></div>
<div class="a" style="left:1461px;top:469px;width:107px;height:23px;background:#4e4e4e;border:1px solid #494949;border-radius:3px"></div>
<svg style="left:1470.0px;top:473.5px" width="14" height="14" viewBox="0 0 14 14"><circle cx="6" cy="6" r="4.2" fill="none" stroke="#9a9a9a" stroke-width="1.4"/><path d="M9 9 L12.5 12.5" stroke="#9a9a9a" stroke-width="1.8"/></svg>
<div class="t" style="left:1488px;top:474px;font-size:12.5px;color:#9a9a9a">Kind</div>
<svg style="left:1555px;top:479px" width="9" height="5" viewBox="0 0 9 5"><path d="M0.5 0.5 L4.5 4.5 L8.5 0.5" fill="none" stroke="#8a8a8a" stroke-width="1"/></svg>
<svg style="left:1584.0px;top:474.0px" width="16" height="13" viewBox="0 0 16 13"><rect x="1" y="1" width="14" height="11" fill="none" stroke="#9a9a9a" stroke-width="1.3"/><path d="M3 10 L6 6 L8 8 L10 5 L13 10 Z" fill="#9a9a9a"/></svg>
<svg style="left:1614.0px;top:473.5px" width="14" height="14" viewBox="0 0 14 14"><circle cx="7" cy="7" r="6" fill="none" stroke="#9a9a9a" stroke-width="1.4"/><path d="M11 3 A6 6 0 0 1 3 11 Z" fill="#9a9a9a"/></svg>
<svg style="left:1644.5px;top:473.5px" width="14" height="14" viewBox="0 0 14 14"><path d="M1 1 H13 V4.5 H12 C11.8 3 11.3 2.5 10 2.5 H8 V12 C8 12.5 8.5 12.8 9.5 12.8 V13.5 H4.5 V12.8 C5.5 12.8 6 12.5 6 12 V2.5 H4 C2.7 2.5 2.2 3 2 4.5 H1 Z" fill="#9a9a9a"/></svg>
<svg style="left:1675.0px;top:473.5px" width="14" height="14" viewBox="0 0 14 14"><rect x="2" y="2" width="10" height="10" fill="none" stroke="#9a9a9a" stroke-width="1.3"/><g fill="#9a9a9a"><rect x="0" y="0" width="4" height="4"/><rect x="10" y="0" width="4" height="4"/><rect x="0" y="10" width="4" height="4"/><rect x="10" y="10" width="4" height="4"/></g></svg>
<svg style="left:1705.0px;top:473.5px" width="14" height="14" viewBox="0 0 14 14"><path d="M5 0.5 H10 L13 3.5 V13.5 H5 Z" fill="none" stroke="#9a9a9a" stroke-width="1.2"/><rect x="1" y="7" width="6" height="7" fill="#9a9a9a"/></svg>
<div class="a" style="left:1734px;top:469px;width:10px;height:18px;background:#4a4a4a;border-radius:5px"></div><div class="a" style="left:1734px;top:469px;width:10px;height:10px;background:#8a8a8a;border-radius:50%"></div>
<div class="a" style="left:1461px;top:505px;width:160px;height:22px;background:#4e4e4e;border:1px solid #494949;border-radius:3px"></div>
<div class="t" style="left:1471px;top:509px;font-size:12.5px;color:#9a9a9a">Normal</div>
<svg style="left:1607px;top:515px" width="9" height="5" viewBox="0 0 9 5"><path d="M0.5 0.5 L4.5 4.5 L8.5 0.5" fill="none" stroke="#8a8a8a" stroke-width="1"/></svg>
<div class="t" style="left:1630px;top:510px;font-size:12.5px;color:#9a9a9a">Opacity:</div>
<div class="a" style="left:1682px;top:505px;width:61px;height:20px;background:#4e4e4e;border:1px solid #494949;border-radius:2px"></div><div class="a" style="left:1683px;top:506px;width:42px;height:18px;background:#4a4a4a"></div><div class="a" style="left:1725px;top:506px;width:1px;height:18px;background:#444"></div>
<div class="t" style="left:1686px;top:509px;font-size:12.5px;color:#7a7a7a">100%</div>
<svg style="left:1730px;top:514px" width="9" height="5" viewBox="0 0 9 5"><path d="M0.5 0.5 L4.5 4.5 L8.5 0.5" fill="none" stroke="#7a7a7a" stroke-width="1"/></svg>
<div class="t" style="left:1464px;top:544px;font-size:12.5px;color:#9a9a9a">Lock:</div>
<svg style="left:1505.0px;top:542.5px" width="14" height="14" viewBox="0 0 14 14"><rect x="0.5" y="0.5" width="13" height="13" fill="#9a9a9a"/><g fill="#535353"><rect x="3.5" y="0.5" width="3.5" height="3.5"/><rect x="10" y="0.5" width="3.5" height="3.5"/><rect x="0.5" y="3.5" width="3.5" height="3.5"/><rect x="7" y="3.5" width="3.5" height="3.5"/><rect x="3.5" y="7" width="3.5" height="3.5"/><rect x="10" y="7" width="3.5" height="3.5"/><rect x="0.5" y="10" width="3.5" height="3.5"/><rect x="7" y="10" width="3.5" height="3.5"/></g></svg>
<svg style="left:1532.0px;top:541.5px" width="16" height="16" viewBox="0 0 16 16"><path d="M15 0.5 L8 8 C6 8 5 9.5 4.5 11.5 C4 13 3 14 1 15.5 C4 15.5 7 14.5 8 12 L9 10 L16 2 Z" fill="#9a9a9a"/></svg>
<svg style="left:1558.0px;top:541.5px" width="16" height="16" viewBox="0 0 16 16"><path d="M8 0.5 L10.5 3 H9 V7 H13 V5.5 L15.5 8 L13 10.5 V9 H9 V13 H10.5 L8 15.5 L5.5 13 H7 V9 H3 V10.5 L0.5 8 L3 5.5 V7 H7 V3 H5.5 Z" fill="none" stroke="#9a9a9a" stroke-width="1.1"/></svg>
<svg style="left:1586.0px;top:541.5px" width="16" height="16" viewBox="0 0 16 16"><path d="M3 3 H13 V13 H3 Z M0 3 H3 M3 0 V3 M13 13 H16 M13 13 V16 M0 13 H3 M13 0 V3" fill="none" stroke="#9a9a9a" stroke-width="1.3"/></svg>
<svg style="left:1615.0px;top:542.0px" width="14" height="15" viewBox="0 0 14 15"><path d="M4 6 V4 C4 1 10 1 10 4 V6" fill="none" stroke="#9a9a9a" stroke-width="1.5"/><rect x="2" y="6" width="10" height="8" fill="#9a9a9a"/><circle cx="7" cy="10" r="1.2" fill="#535353"/></svg>
<div class="t" style="left:1657px;top:544px;font-size:12.5px;color:#9a9a9a">Fill:</div>
<div class="a" style="left:1682px;top:540px;width:61px;height:20px;background:#4e4e4e;border:1px solid #494949;border-radius:2px"></div><div class="a" style="left:1683px;top:541px;width:42px;height:18px;background:#4a4a4a"></div><div class="a" style="left:1725px;top:541px;width:1px;height:18px;background:#444"></div>
<div class="t" style="left:1686px;top:544px;font-size:12.5px;color:#7a7a7a">100%</div>
<svg style="left:1730px;top:549px" width="9" height="5" viewBox="0 0 9 5"><path d="M0.5 0.5 L4.5 4.5 L8.5 0.5" fill="none" stroke="#7a7a7a" stroke-width="1"/></svg>
<div class="a" style="left:1456px;top:570px;width:443px;height:28px;background:#535353"></div>
<div class="a" style="left:1494px;top:570px;width:405px;height:28px;background:#6a6a6a"></div>
<svg style="left:1467.0px;top:579.0px" width="16" height="12" viewBox="0 0 16 12"><path d="M1 6 C4 1 12 1 15 6 C12 11 4 11 1 6 Z" fill="#e8e8e8"/><circle cx="8" cy="6" r="2.6" fill="#535353"/><circle cx="8" cy="6" r="1.2" fill="#e8e8e8"/></svg>
<div class="a" style="left:1498px;top:575px;width:40px;height:17px;background:#fff;border:1px solid #222"></div>
<div class="t" style="left:1551px;top:578px;font-size:13px;font-style:italic;color:#f0f0f0;letter-spacing:-0.2px">Background</div>
<svg style="left:1866.5px;top:576.0px" width="13" height="16" viewBox="0 0 13 16"><path d="M3.5 6 V4 C3.5 0.8 9.5 0.8 9.5 4 V6" fill="none" stroke="#e8e8e8" stroke-width="1.3"/><rect x="1" y="6" width="11" height="9" fill="none" stroke="#e8e8e8" stroke-width="1.3"/><rect x="5.6" y="9.5" width="1.8" height="1.8" fill="#e8e8e8"/></svg>
<div class="a" style="left:1456px;top:598px;width:443px;height:390px;background:#4a4a4a"></div>
<div class="a" style="left:1899px;top:570px;width:20px;height:418px;background:#4a4a4a"></div>
<div class="a" style="left:1456px;top:988px;width:463px;height:1px;background:#3c3c3c"></div>
<svg style="left:1665.0px;top:997.5px" width="18" height="13" viewBox="0 0 18 13"><g fill="none" stroke="#9a9a9a" stroke-width="1.8"><path d="M7 3 H4.5 A3.5 3.5 0 0 0 4.5 10 H7 M11 3 H13.5 A3.5 3.5 0 0 1 13.5 10 H11 M5.5 6.5 H12.5"/></g></svg>
<div class="t" style="left:1700px;top:995px;font-size:16px;font-style:italic;font-family:'Liberation Serif';color:#9a9a9a">fx</div>
<svg style="left:1734.0px;top:998.0px" width="16" height="12" viewBox="0 0 16 12"><rect x="0" y="0" width="16" height="12" fill="#9a9a9a"/><circle cx="8" cy="6" r="3.5" fill="#535353"/></svg>
<svg style="left:1768.0px;top:996.0px" width="16" height="16" viewBox="0 0 16 16"><circle cx="7" cy="7" r="6" fill="none" stroke="#9a9a9a" stroke-width="1.5"/><path d="M11 3 A6 6 0 0 1 3 11 Z" fill="#9a9a9a"/><path d="M12 13 L16 13 L14 15.5 Z" fill="#e0e0e0"/></svg>
<svg style="left:1801.0px;top:997.0px" width="16" height="14" viewBox="0 0 16 14"><path d="M0.5 1 H6 L7.5 3 H15.5 V13 H0.5 Z" fill="#9a9a9a"/><path d="M0.5 4.2 H15.5" stroke="#535353" stroke-width="0.8"/></svg>
<svg style="left:1835.0px;top:996.0px" width="16" height="16" viewBox="0 0 16 16"><rect x="1" y="1" width="14" height="14" fill="none" stroke="#9a9a9a" stroke-width="1.6"/><path d="M8 4 V12 M4 8 H12" stroke="#9a9a9a" stroke-width="1.6"/></svg>
<svg style="left:1868.0px;top:995.5px" width="16" height="17" viewBox="0 0 16 17"><path d="M1 3 H15 M5.5 3 V1 H10.5 V3" fill="none" stroke="#9a9a9a" stroke-width="1.3"/><path d="M2.5 5 H13.5 V16 H2.5 Z" fill="none" stroke="#9a9a9a" stroke-width="1.3"/><path d="M6 7 V14 M8 7 V14 M10 7 V14" stroke="#9a9a9a" stroke-width="1"/></svg>
<!--/RIGHT1-->

<!--CHAR-->
<div class="a" style="left:1134px;top:188px;width:271px;height:288px;background:#535353;border:1px solid #333;border-top:5px solid #303030;box-shadow:0 0 3px 2px rgba(0,0,0,.35)"></div>
<div class="a" style="left:1135px;top:193px;width:269px;height:35px;background:#424242"></div>
<div class="a" style="left:1135px;top:193px;width:78px;height:35px;background:#535353"></div>
<div class="a" style="left:1294px;top:193px;width:1px;height:34px;background:#3a3a3a"></div>
<div class="t tab" style="left:1146px;top:201.15px;color:#f0f0f0">Character</div>
<div class="t tab" style="left:1224px;top:201.15px;color:#a8a8a8">Paragraph</div>
<svg style="left:1361px;top:205px" width="12" height="9" viewBox="0 0 12 9"><path d="M0.5 0.5 L4.5 4.5 L0.5 8.5 M6 0.5 L10 4.5 L6 8.5" fill="none" stroke="#d0d0d0" stroke-width="1"/></svg>
<div class="a" style="left:1380px;top:204px;width:1px;height:12px;background:#d0d0d0"></div>
<svg style="left:1388px;top:205px" width="11" height="9" viewBox="0 0 11 9"><g fill="#d0d0d0"><rect y="0" width="11" height="1.2"/><rect y="2.6" width="11" height="1.2"/><rect y="5.2" width="11" height="1.2"/><rect y="7.8" width="11" height="1.2"/></g></svg>
<div class="a" style="left:1141px;top:245px;width:148px;height:20px;background:#454545;border:1px solid #5c5c5c;border-radius:3px"></div><div class="t" style="left:1146px;top:249.25px;font-size:12.5px;color:#e8e8e8">Averta CY</div><div class="a" style="left:1271px;top:246px;width:1px;height:18px;background:#3a3a3a"></div><svg style="left:1276px;top:254.0px" width="9" height="5" viewBox="0 0 9 5"><path d="M0.5 0.5 L4.5 4.5 L8.5 0.5" fill="none" stroke="#e0e0e0" stroke-width="1.1"/></svg>
<div class="a" style="left:1306px;top:245px;width:90px;height:20px;background:#454545;border:1px solid #5c5c5c;border-radius:3px"></div><div class="t" style="left:1311px;top:249.25px;font-size:12.5px;color:#e8e8e8">Bold</div><div class="a" style="left:1378px;top:246px;width:1px;height:18px;background:#3a3a3a"></div><svg style="left:1383px;top:254.0px" width="9" height="5" viewBox="0 0 9 5"><path d="M0.5 0.5 L4.5 4.5 L8.5 0.5" fill="none" stroke="#e0e0e0" stroke-width="1.1"/></svg>
<div class="a" style="left:1167px;top:276px;width:92px;height:19px;background:#454545;border:1px solid #5c5c5c;border-radius:3px"></div><div class="t" style="left:1172px;top:279.75px;font-size:12.5px;color:#e8e8e8">16.93 mm</div><div class="a" style="left:1241px;top:277px;width:1px;height:17px;background:#3a3a3a"></div><svg style="left:1246px;top:284.5px" width="9" height="5" viewBox="0 0 9 5"><path d="M0.5 0.5 L4.5 4.5 L8.5 0.5" fill="none" stroke="#e0e0e0" stroke-width="1.1"/></svg>
<div class="a" style="left:1310px;top:276px;width:86px;height:19px;background:#454545;border:1px solid #5c5c5c;border-radius:3px"></div><div class="t" style="left:1315px;top:279.75px;font-size:12.5px;color:#e8e8e8">(Auto)</div><div class="a" style="left:1378px;top:277px;width:1px;height:17px;background:#3a3a3a"></div><svg style="left:1383px;top:284.5px" width="9" height="5" viewBox="0 0 9 5"><path d="M0.5 0.5 L4.5 4.5 L8.5 0.5" fill="none" stroke="#e0e0e0" stroke-width="1.1"/></svg>
<div class="a" style="left:1167px;top:301px;width:92px;height:19px;background:#454545;border:1px solid #5c5c5c;border-radius:3px"></div><div class="t" style="left:1172px;top:304.75px;font-size:12.5px;color:#e8e8e8">Metrics</div><div class="a" style="left:1241px;top:302px;width:1px;height:17px;background:#3a3a3a"></div><svg style="left:1246px;top:309.5px" width="9" height="5" viewBox="0 0 9 5"><path d="M0.5 0.5 L4.5 4.5 L8.5 0.5" fill="none" stroke="#e0e0e0" stroke-width="1.1"/></svg>
<div class="a" style="left:1310px;top:301px;width:86px;height:19px;background:#454545;border:1px solid #5c5c5c;border-radius:3px"></div><div class="t" style="left:1315px;top:304.75px;font-size:12.5px;color:#e8e8e8">0</div><div class="a" style="left:1378px;top:302px;width:1px;height:17px;background:#3a3a3a"></div><svg style="left:1383px;top:309.5px" width="9" height="5" viewBox="0 0 9 5"><path d="M0.5 0.5 L4.5 4.5 L8.5 0.5" fill="none" stroke="#e0e0e0" stroke-width="1.1"/></svg>
<div class="a" style="left:1165px;top:324px;width:69px;height:21px;background:#454545;border:1px solid #5c5c5c;border-radius:3px"></div><div class="t" style="left:1170px;top:328.75px;font-size:12.5px;color:#e8e8e8">100%</div>
<div class="a" style="left:1330px;top:324px;width:68px;height:21px;background:#454545;border:1px solid #5c5c5c;border-radius:3px"></div><div class="t" style="left:1335px;top:328.75px;font-size:12.5px;color:#e8e8e8">100%</div>
<div class="a" style="left:1166px;top:350px;width:69px;height:21px;background:#454545;border:1px solid #5c5c5c;border-radius:3px"></div><div class="t" style="left:1171px;top:354.75px;font-size:12.5px;color:#e8e8e8">0 mm</div>
<div class="t" style="left:1288px;top:356px;font-size:12.5px;color:#d8d8d8">Color:</div>
<div class="a" style="left:1329px;top:349px;width:70px;height:25px;background:#9e3651;border:1px solid #2e2e2e"></div>
<div class="a" style="left:1141px;top:448px;width:143px;height:22px;background:#454545;border:1px solid #5c5c5c;border-radius:3px"></div><div class="t" style="left:1151px;top:453.25px;font-size:12.5px;color:#e8e8e8">English: UK</div><svg style="left:1271px;top:458.0px" width="9" height="5" viewBox="0 0 9 5"><path d="M0.5 0.5 L4.5 4.5 L8.5 0.5" fill="none" stroke="#e0e0e0" stroke-width="1.1"/></svg>
<div class="a" style="left:1315px;top:448px;width:82px;height:22px;background:#454545;border:1px solid #5c5c5c;border-radius:3px"></div><div class="t" style="left:1325px;top:453.25px;font-size:12.5px;color:#e8e8e8">Sharp</div><svg style="left:1384px;top:458.0px" width="9" height="5" viewBox="0 0 9 5"><path d="M0.5 0.5 L4.5 4.5 L8.5 0.5" fill="none" stroke="#e0e0e0" stroke-width="1.1"/></svg>
<svg style="left:1140px;top:276px" width="22" height="20" viewBox="0 0 22 20"><g fill="#e0e0e0"><path d="M5 1 H21 V5 H20 C19.8 3 19 2.6 17.5 2.6 H14.3 V17.5 C14.3 18.2 14.8 18.5 16.5 18.5 V19.5 H9.5 V18.5 C11.2 18.5 11.7 18.2 11.7 17.5 V2.6 H8.5 C7 2.6 6.2 3 6 5 H5 Z"/><path d="M0.5 9 H8 V11 H7.5 C7.4 10.2 7 10 6.3 10 H5 V18 C5 18.5 5.3 18.7 6.2 18.7 V19.5 H2.3 V18.7 C3.2 18.7 3.5 18.5 3.5 18 V10 H2.2 C1.5 10 1.1 10.2 1 11 H0.5 Z"/></g></svg>
<svg style="left:1284px;top:273px" width="22" height="24" viewBox="0 0 22 24"><g fill="none" stroke="#e0e0e0" stroke-width="1.2"><path d="M11 1 L7.5 9 M11 1 L14.5 9 M8.8 6 H13.2 M6 10 H20 M11 13 L7.5 21 M11 13 L14.5 21 M8.8 18 H13.2 M6 22 H20"/><path d="M2.5 13 V22"/></g><path d="M0.5 14.5 L2.5 11.5 L4.5 14.5 Z M0.5 20.5 L2.5 23.5 L4.5 20.5 Z" fill="#e0e0e0"/></svg>
<div class="t" style="left:1139px;top:301px;font-size:14px;color:#e0e0e0;letter-spacing:-1px">V/A</div><svg style="left:1150px;top:315px" width="12" height="6" viewBox="0 0 12 6"><path d="M1 3 H11.5 M3.5 0.5 L1 3 L3.5 5.5" fill="none" stroke="#e0e0e0" stroke-width="1.2"/></svg>
<svg style="left:1284px;top:300px" width="22" height="22" viewBox="0 0 22 22"><rect x="0" y="0" width="21.5" height="14" fill="#e0e0e0"/><path d="M2.2 2 L6 12 L9.8 2 M10.5 12 L14.6 2 L18.7 12 M12 8.6 H17.2" fill="none" stroke="#4a4a4a" stroke-width="2.2" stroke-linejoin="round"/><path d="M1.5 19 H20" stroke="#e0e0e0" stroke-width="1.3"/><path d="M0 19 L3.6 16 V22 Z M21.5 19 L17.9 16 V22 Z" fill="#e0e0e0"/></svg>
<svg style="left:1139px;top:326px" width="24" height="19" viewBox="0 0 24 19"><path d="M3.5 1 V18" stroke="#e0e0e0" stroke-width="1.4"/><path d="M0.8 3.8 L3.5 0.5 L6.2 3.8 Z M0.8 15.2 L3.5 18.5 L6.2 15.2 Z" fill="#e0e0e0"/><path d="M8 0.5 H23.5 V4.5 H22.5 C22.3 2.8 21.6 2.4 20.2 2.4 H17 V16.5 C17 17.2 17.5 17.5 19 17.5 V18.5 H12.5 V17.5 C14 17.5 14.5 17.2 14.5 16.5 V2.4 H11.3 C9.9 2.4 9.2 2.8 9 4.5 H8 Z" fill="#e0e0e0"/></svg>
<svg style="left:1304px;top:325px" width="24" height="21" viewBox="0 0 24 21"><path d="M5 0.5 H19 V4 H18 C17.8 2.6 17.2 2.2 16 2.2 H13.2 V11.5 C13.2 12.2 13.7 12.5 15 12.5 V13.5 H9 V12.5 C10.3 12.5 10.8 12.2 10.8 11.5 V2.2 H8 C6.8 2.2 6.2 2.6 6 4 H5 Z" fill="#e0e0e0"/><path d="M2 17.5 H22" stroke="#e0e0e0" stroke-width="1.3"/><path d="M0.5 17.5 L4 14.5 V20.5 Z M23.5 17.5 L20 14.5 V20.5 Z" fill="#e0e0e0"/></svg>
<svg style="left:1141px;top:352px" width="20" height="20" viewBox="0 0 20 20"><g fill="none" stroke="#e0e0e0" stroke-width="1.2"><path d="M1 12.5 L5 1.5 L9 12.5 M2.5 8.5 H7.5 M0.5 14.2 H9.5"/></g><text x="12.5" y="7.5" font-size="9" fill="#e0e0e0" font-family="Liberation Sans">a</text><path d="M14.8 10 V19" stroke="#e0e0e0" stroke-width="1.3"/><path d="M12.3 13 L14.8 10 L17.3 13 Z" fill="#e0e0e0"/></svg>
<div class="a" style="left:1151px;top:378px;width:27px;height:27px;background:#383838;border-radius:2px"></div>
<div class="a" style="left:1211px;top:378px;width:27px;height:27px;background:#383838;border-radius:2px"></div>
<div class="a" style="left:1181px;top:413px;width:27px;height:27px;background:#383838;border-radius:2px"></div>
<div class="t" style="left:1148px;width:32px;text-align:center;top:382px;font-size:19px;font-family:'Liberation Serif';color:#e0e0e0;font-weight:bold">T</div>
<div class="t" style="left:1178.5px;width:32px;text-align:center;top:382px;font-size:19px;font-family:'Liberation Serif';color:#e0e0e0;font-style:italic">T</div>
<div class="t" style="left:1208px;width:32px;text-align:center;top:382px;font-size:18px;font-family:'Liberation Serif';color:#e0e0e0;font-weight:bold;letter-spacing:-0.5px">TT</div>
<div class="t" style="left:1238px;width:32px;text-align:center;top:382px;font-size:19px;font-family:'Liberation Serif';color:#e0e0e0;font-weight:bold">T<span style="font-size:12px">T</span></div>
<div class="t" style="left:1269px;width:32px;text-align:center;top:382px;font-size:19px;font-family:'Liberation Serif';color:#e0e0e0;font-weight:bold">T<span style="font-size:9px;vertical-align:7px">1</span></div>
<div class="t" style="left:1299px;width:32px;text-align:center;top:382px;font-size:19px;font-family:'Liberation Serif';color:#e0e0e0;font-weight:bold">T<span style="font-size:9px;vertical-align:-2px">1</span></div>
<div class="t" style="left:1328px;width:32px;text-align:center;top:382px;font-size:19px;font-family:'Liberation Serif';color:#e0e0e0;font-weight:bold">T</div>
<div class="a" style="left:1336px;top:400px;width:15px;height:1.3px;background:#e0e0e0"></div>
<div class="t" style="left:1357.5px;width:32px;text-align:center;top:382px;font-size:19px;font-family:'Liberation Serif';color:#e0e0e0;font-weight:bold">T</div>
<div class="a" style="left:1365px;top:391px;width:15px;height:1.3px;background:#e0e0e0"></div>
<div class="t" style="left:1148px;width:32px;text-align:center;top:418px;font-size:20px;font-family:'Liberation Serif';color:#e0e0e0;font-weight:bold;color:#8e8e8e">fi</div>
<svg style="left:1186px;top:418px" width="20" height="18" viewBox="0 0 20 18"><path d="M7 16.5 C2.5 16.5 2 10 5.5 8 C9 6 10.5 11 8.5 15 C7.5 17 12 7 18.5 5.5" fill="none" stroke="#e0e0e0" stroke-width="1.7"/></svg>
<div class="t" style="left:1208px;width:32px;text-align:center;top:418px;font-size:20px;font-family:'Liberation Serif';color:#e0e0e0;font-weight:bold;letter-spacing:-1px">st</div>
<div class="t" style="left:1238px;width:32px;text-align:center;top:418px;font-size:21px;font-family:'Liberation Serif';color:#e0e0e0;font-style:italic;color:#8e8e8e">A</div>
<div class="t" style="left:1269px;width:32px;text-align:center;top:420px;font-size:18px;font-family:'Liberation Serif';color:#e0e0e0;font-weight:bold;letter-spacing:-0.5px">aa</div>
<svg style="left:1274px;top:415px" width="21" height="6" viewBox="0 0 21 6"><path d="M0 3 H20 M16.5 0.5 L20 3 L16.5 5.5" fill="none" stroke="#e0e0e0" stroke-width="1.4"/></svg>
<div class="t" style="left:1299px;width:32px;text-align:center;top:418px;font-size:21px;font-family:'Liberation Serif';color:#e0e0e0;font-style:italic;color:#8e8e8e">T</div>
<div class="t" style="left:1328px;width:32px;text-align:center;top:418px;font-size:20px;font-family:'Liberation Serif';color:#e0e0e0;font-weight:bold">1<span style="font-size:11px;vertical-align:7px">st</span></div>
<div class="t" style="left:1357.5px;width:32px;text-align:center;top:418px;font-size:20px;font-family:'Liberation Serif';color:#e0e0e0;font-weight:bold">&#189;</div>
<div class="t" style="left:1289px;top:448px;font-size:13px;font-family:'Liberation Serif';color:#e0e0e0">a</div><div class="t" style="left:1296px;top:451px;font-size:17px;font-family:'Liberation Serif';color:#e0e0e0">a</div>
<!--/CHAR-->
<!-- MENU -->
<!--MENU-->
<div class="a" style="left:401px;top:25px;width:250px;height:773px;background:#f0f0f0;border:1px solid #979797;box-shadow:2px 2px 2px rgba(0,0,0,.5)"></div>
<div class="t mi" style="left:425px;top:32.7px;color:#000">Proof Setup</div>
<div class="a" style="left:635px;top:33.4px;width:0;height:0;border-left:6px solid #000;border-top:5.5px solid transparent;border-bottom:5.5px solid transparent"></div>
<div class="t mi" style="left:425px;top:53.9px;color:#000">Proof Colors</div>
<div class="t mi" style="right:1292px;top:53.9px;color:#000">Ctrl+Y</div>
<div class="t mi" style="left:425px;top:77.3px;color:#000">Gamut Warning</div>
<div class="t mi" style="right:1292px;top:77.3px;color:#000">Shift+Ctrl+Y</div>
<div class="t mi" style="left:425px;top:101.3px;color:#000">Pixel Aspect Ratio</div>
<div class="a" style="left:635px;top:102.0px;width:0;height:0;border-left:6px solid #000;border-top:5.5px solid transparent;border-bottom:5.5px solid transparent"></div>
<div class="t mi" style="left:425px;top:124.3px;color:#6d6d6d">Pixel Aspect Ratio Correction</div>
<div class="t mi" style="left:425px;top:146.3px;color:#6d6d6d">32-bit Preview Options...</div>
<div class="a" style="left:404px;top:171px;width:244px;height:1px;background:#c9c9c9"></div>
<div class="t mi" style="left:425px;top:180.0px;color:#000">Zoom In</div>
<div class="t mi" style="right:1292px;top:180.0px;color:#000">Ctrl++</div>
<div class="t mi" style="left:425px;top:204.2px;color:#000">Zoom Out</div>
<div class="t mi" style="right:1292px;top:204.2px;color:#000">Ctrl+-</div>
<div class="t mi" style="left:425px;top:225.6px;color:#000">Fit on Screen</div>
<div class="t mi" style="right:1292px;top:225.6px;color:#000">Ctrl+0</div>
<div class="t mi" style="left:425px;top:249.0px;color:#000">Fit Layer(s) on Screen</div>
<div class="t mi" style="left:425px;top:272.7px;color:#6d6d6d">Fit Artboard on Screen</div>
<div class="t mi" style="left:425px;top:294.7px;color:#000">100%</div>
<div class="t mi" style="right:1292px;top:294.7px;color:#000">Ctrl+1</div>
<div class="t mi" style="left:425px;top:318.8px;color:#000">200%</div>
<div class="t mi" style="left:425px;top:340.8px;color:#000">Print Size</div>
<div class="t mi" style="left:425px;top:364.3px;color:#000">Flip Horizontal</div>
<div class="a" style="left:404px;top:388px;width:244px;height:1px;background:#c9c9c9"></div>
<div class="t mi" style="left:425px;top:399.7px;color:#000">Screen Mode</div>
<div class="a" style="left:635px;top:400.4px;width:0;height:0;border-left:6px solid #000;border-top:5.5px solid transparent;border-bottom:5.5px solid transparent"></div>
<div class="a" style="left:404px;top:424px;width:244px;height:1px;background:#c9c9c9"></div>
<div class="t mi" style="left:425px;top:432.7px;color:#000">Extras</div>
<div class="t mi" style="right:1292px;top:432.7px;color:#000">Ctrl+H</div>
<div class="t mi" style="left:425px;top:455.9px;color:#000">Show</div>
<div class="a" style="left:635px;top:456.6px;width:0;height:0;border-left:6px solid #000;border-top:5.5px solid transparent;border-bottom:5.5px solid transparent"></div>
<div class="a" style="left:404px;top:479px;width:244px;height:2px;background:#c4c4c4"></div>
<div class="a" style="left:404px;top:486px;width:244px;height:22px;background:#0078d7"></div>
<div class="t mi" style="left:425px;top:488.6px;color:#fff">Rulers</div>
<div class="t mi" style="right:1292px;top:488.6px;color:#fff">Ctrl+R</div>
<div class="a" style="left:404px;top:513px;width:244px;height:1px;background:#c9c9c9"></div>
<div class="t mi" style="left:425px;top:524.2px;color:#000">Snap</div>
<div class="t mi" style="right:1292px;top:524.2px;color:#000">Shift+Ctrl+;</div>
<svg style="left:407px;top:524.9px" width="12" height="11" viewBox="0 0 12 11"><path d="M1 5.5 L4.2 8.8 L10.8 1.5" fill="none" stroke="#000" stroke-width="2.2"/></svg>
<div class="t mi" style="left:425px;top:547.9px;color:#000">Snap To</div>
<div class="a" style="left:635px;top:548.6px;width:0;height:0;border-left:6px solid #000;border-top:5.5px solid transparent;border-bottom:5.5px solid transparent"></div>
<div class="a" style="left:404px;top:571px;width:244px;height:1px;background:#c9c9c9"></div>
<div class="t mi" style="left:425px;top:580.1px;color:#000">Lock Guides</div>
<div class="t mi" style="right:1292px;top:580.1px;color:#000">Alt+Ctrl+;</div>
<div class="t mi" style="left:425px;top:604.2px;color:#6d6d6d">Clear Guides</div>
<div class="t mi" style="left:425px;top:626.1px;color:#6d6d6d">Clear Selected Artboard Guides</div>
<div class="t mi" style="left:425px;top:649.0px;color:#6d6d6d">Clear Canvas Guides</div>
<div class="t mi" style="left:425px;top:673.3px;color:#000">New Guide...</div>
<div class="t mi" style="left:425px;top:694.8px;color:#000">New Guide Layout...</div>
<div class="t mi" style="left:425px;top:719.3px;color:#6d6d6d">New Guides From Shape</div>
<div class="a" style="left:404px;top:744px;width:244px;height:1px;background:#c9c9c9"></div>
<div class="t mi" style="left:425px;top:753.1px;color:#000">Lock Slices</div>
<div class="t mi" style="left:425px;top:774.7px;color:#6d6d6d">Clear Slices</div>
<!--/MENU-->
</body></html>
